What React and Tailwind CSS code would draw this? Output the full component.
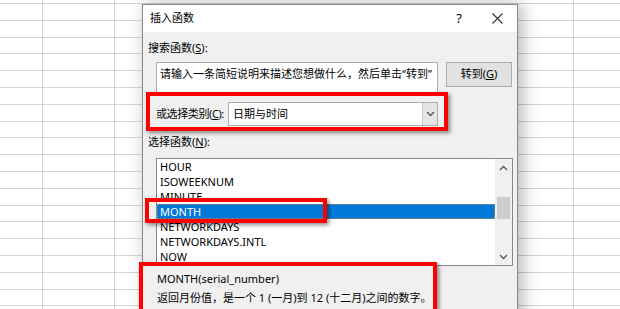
import React from 'react';

// Fond de tableur : lignes de la grille
const rows = Array.from({ length: 19 });

function Grid() {
  return (
    <div className="flex flex-col">
      <div className="flex h-[4px]">
        <div className="w-[43px] border-r border-b border-[#d4d4d4]" />
        <div className="w-[72px] border-r border-b border-[#d4d4d4]" />
        <div className="w-[459px] border-r border-b border-[#d4d4d4]" />
        <div className="flex-1 border-b border-[#d4d4d4]" />
      </div>
      {rows.map((_, i) => (
        <div key={i} className="flex h-[16.8px]">
          <div className="w-[43px] border-r border-b border-[#d4d4d4]" />
          <div className="w-[72px] border-r border-b border-[#d4d4d4]" />
          <div className="w-[459px] border-r border-b border-[#d4d4d4]" />
          <div className="flex-1 border-b border-[#d4d4d4]" />
        </div>
      ))}
    </div>
  );
}

function Chevron({ up }) {
  return (
    <svg width="9" height="6" viewBox="0 0 9 6">
      <path
        d={up ? 'M1 5 L4.5 1.5 L8 5' : 'M1 1 L4.5 4.5 L8 1'}
        fill="none"
        stroke="#555"
        strokeWidth="1.3"
      />
    </svg>
  );
}

const functions = ['HOUR', 'ISOWEEKNUM', 'MINUTE', 'MONTH', 'NETWORKDAYS', 'NETWORKDAYS.INTL', 'NOW'];

export default function App() {
  return (
    <div className="relative w-[620px] h-[309px] overflow-hidden bg-white font-['Noto_Sans','Noto_Sans_CJK_SC',sans-serif] text-[11px] text-black">
      <Grid />

      {/* Boîte de dialogue */}
      <div className="absolute left-[142px] top-[4px] w-[376px] h-[330px] border border-[#8a8a8a] bg-[#f0f0f0] shadow-[4px_0_16px_rgba(0,0,0,0.3)]">
        <div className="flex items-center justify-between h-[27px] bg-white pl-[7px]">
          <span>插入函数</span>
          <div className="flex items-center gap-[30px] mr-[14px]">
            <span className="text-[13px]">?</span>
            <svg width="11" height="11" viewBox="0 0 11 11">
              <path d="M0.5 0.5 L10.5 10.5 M10.5 0.5 L0.5 10.5" stroke="#333" strokeWidth="1.1" />
            </svg>
          </div>
        </div>

        <div className="pl-[5px]">
          <div className="mt-[8px] h-[16px] leading-[16px]">
            搜索函数(<span className="underline">S</span>):
          </div>

          <div className="flex mt-[6px]">
            <div className="ml-[8px] w-[282px] h-[34px] bg-white border border-[#abadb3] pl-[3px] pt-[3px] leading-[16px] whitespace-nowrap">
              请输入一条简短说明来描述您想做什么，然后单击“转到”
            </div>
            <button className="ml-[8px] w-[66px] h-[25px] bg-[#e1e1e1] border border-[#adadad] text-[11px]">
              转到(<span className="underline">G</span>)
            </button>
          </div>

          <div className="flex items-center mt-[6px] h-[24px]">
            <span className="ml-[8px] w-[72px] shrink-0 whitespace-nowrap tracking-[-0.4px]">
              或选择类别(<span className="underline">C</span>):
            </span>
            <div className="flex w-[210px] h-[24px] bg-white border border-[#abadb3]">
              <span className="flex-1 pl-[4px] leading-[22px]">日期与时间</span>
              <div className="flex items-center justify-center w-[15px] bg-[#e5e5e5] border-l border-[#c8c8c8]">
                <Chevron />
              </div>
            </div>
          </div>

          <div className="mt-[8px] h-[16px] leading-[16px]">
            选择函数(<span className="underline">N</span>):
          </div>

          <div className="flex mt-[8px] ml-[8px] w-[357px] h-[108px] bg-white border border-[#828790]">
            <div className="w-[338px] flex flex-col">
              {functions.map((f) =>
                f === 'MONTH' ? (
                  <div
                    key={f}
                    className="h-[15px] leading-[13px] pl-[2px] bg-[#0078d7] text-white border border-dotted border-[#b8865a]"
                  >
                    {f}
                  </div>
                ) : (
                  <div key={f} className="h-[15px] leading-[15px] pl-[3px]">
                    {f}
                  </div>
                )
              )}
            </div>
            <div className="flex flex-col w-[17px] bg-[#f0f0f0]">
              <div className="flex items-center justify-center h-[17px]">
                <Chevron up />
              </div>
              <div className="flex-1 pt-[21px]">
                <div className="h-[22px] mx-[2px] bg-[#cdcdcd]" />
              </div>
              <div className="flex items-center justify-center h-[17px]">
                <Chevron />
              </div>
            </div>
          </div>

          <div className="mt-[3px] ml-[9px] leading-[19px] whitespace-nowrap">
            <div>MONTH(serial_number)</div>
            <div>返回月份值，是一个 1 (一月)到 12 (十二月)之间的数字。</div>
          </div>
        </div>
      </div>

      {/* Cadres rouges d'annotation */}
      <div className="absolute left-[146px] top-[92px] w-[302px] h-[39px] border-4 border-[#f00] shadow-[2px_2px_4px_rgba(0,0,0,0.45)]" />
      <div className="absolute left-[145px] top-[198px] w-[182px] h-[25px] border-4 border-[#f00] shadow-[2px_2px_4px_rgba(0,0,0,0.45)]" />
      <div className="absolute left-[139px] top-[262px] w-[298px] h-[60px] border-4 border-[#f00] shadow-[2px_2px_4px_rgba(0,0,0,0.45)]" />
    </div>
  );
}
